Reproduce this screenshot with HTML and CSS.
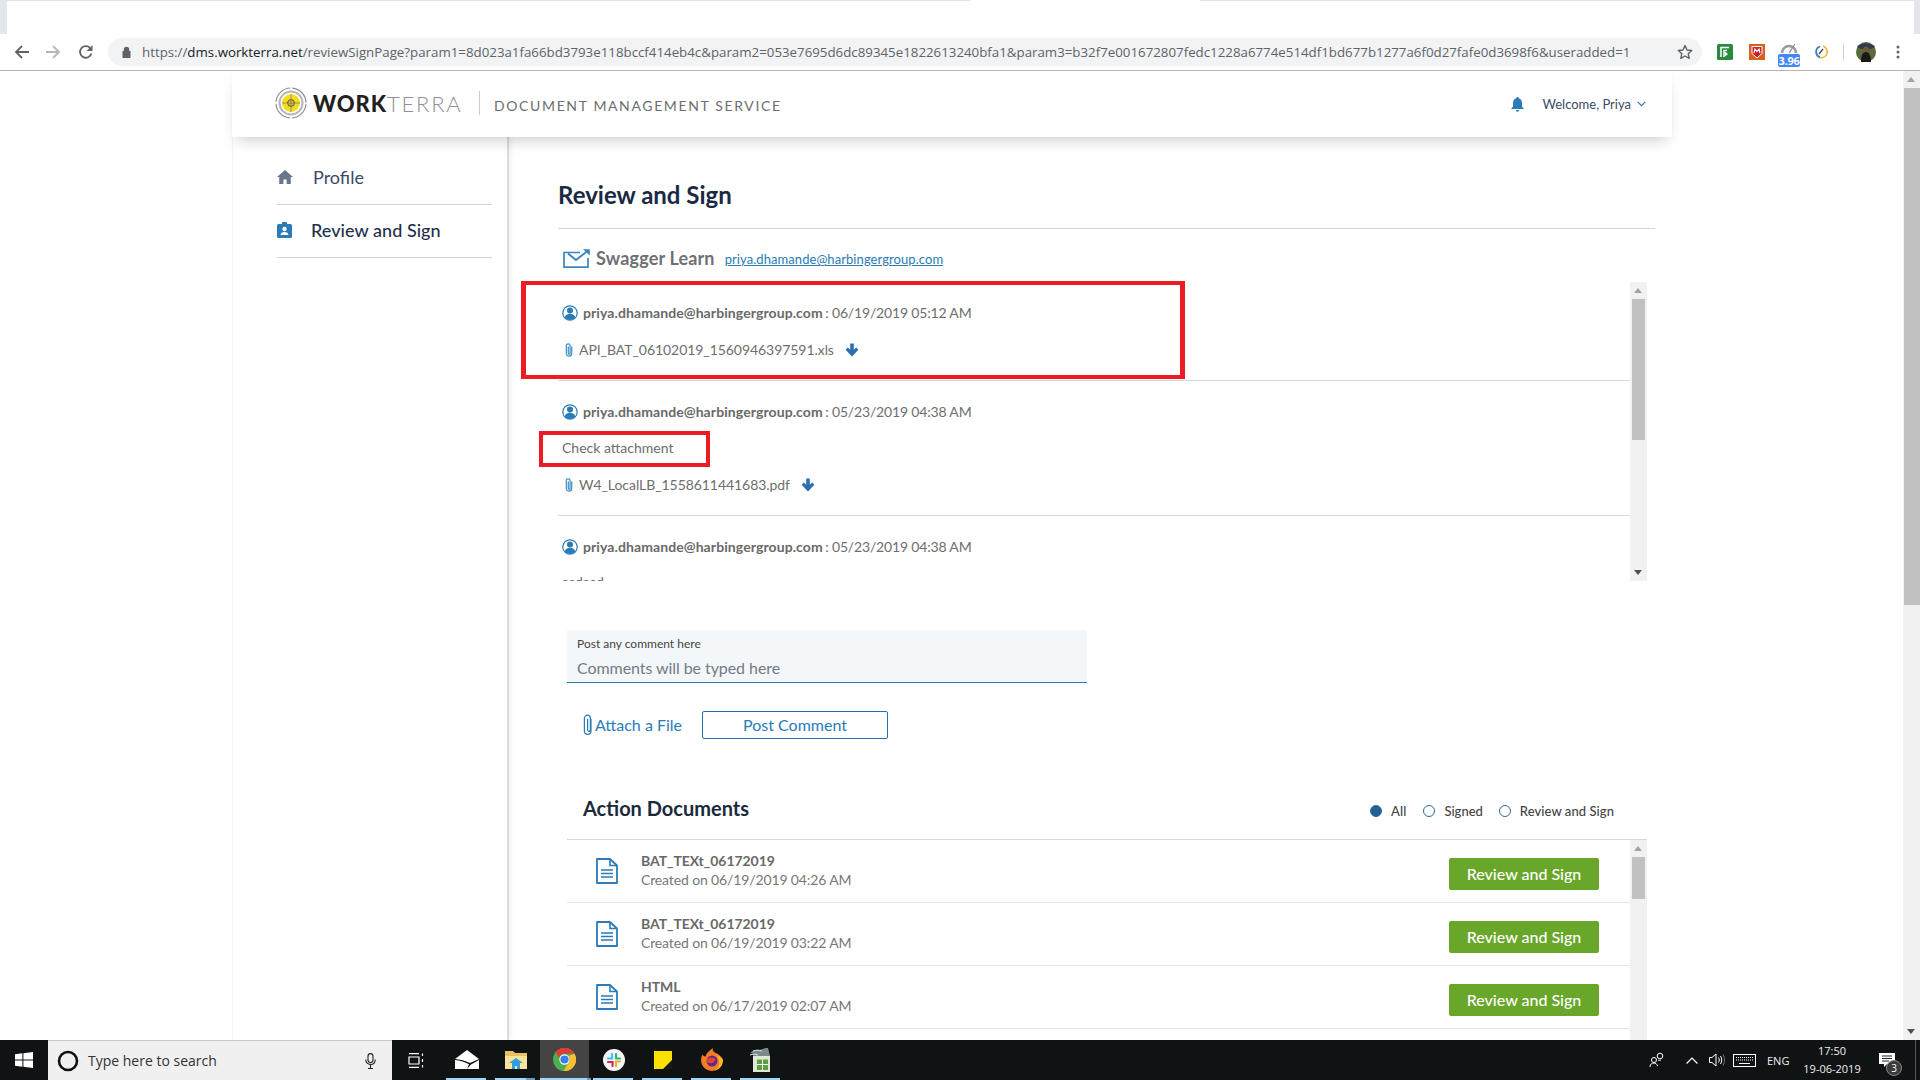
FILE: index.html
```html
<!DOCTYPE html>
<html lang="en">
<head>
<meta charset="utf-8">
<title>Review and Sign</title>
<link rel="stylesheet" href="styles.css">
</head>
<body>
<svg class="defs" width="0" height="0" aria-hidden="true">
  <defs>
    <symbol id="i-user" viewBox="0 0 16 18">
      <circle cx="8" cy="9" r="7.2" fill="#fff" stroke="#2b7bb9" stroke-width="1.2"/>
      <circle cx="8" cy="6.6" r="3" fill="#2b7bb9"/>
      <path d="M2.6 13.6c.7-2.6 2.800-3.800 5.400-3.800s4.700 1.200 5.400 3.800A7 7 0 0 1 8 16a7 7 0 0 1-5.400-2.400z" fill="#2b7bb9"/>
    </symbol>
    <symbol id="i-clip" viewBox="0 0 8 14">
      <path d="M6.700 3.500v7a2.700 2.700 0 0 1-5.400 0V2.800a1.900 1.900 0 0 1 3.800 0v7.400a.9.9 0 0 1-1.800 0V3.500" fill="none" stroke="#3f8bc4" stroke-width="1.200"/>
    </symbol>
    <symbol id="i-down" viewBox="0 0 14 14">
      <path d="M5.200 .5h3.600v6.300l2.300-2.300 2.300 2.300L7 13.500.6 6.800l2.300-2.300 2.300 2.300z" fill="#2b6fb0"/>
    </symbol>
    <symbol id="i-doc" viewBox="0 0 22 26">
      <path d="M1 1h13l7 6.500V25H1z" fill="#fff" stroke="#2b7bb9" stroke-width="1.800" stroke-linejoin="round"/>
      <path d="M14 1v6.500h7M5 12h12M5 15.500h12M5 19h12" fill="none" stroke="#2b7bb9" stroke-width="1.600"/>
    </symbol>
  </defs>
</svg>

<div class="browser">
  <div class="tabstrip">
    <div class="strip-edge"></div>
    <div class="strip-line strip-line-a"></div>
    <div class="strip-tab"></div>
    <div class="strip-line"></div>
    <div class="strip-edge strip-edge-r"></div>
  </div>
  <div class="toolbar">
    <svg class="nav-ico" width="16" height="16" viewBox="0 0 16 16"><path d="M15 8H2M8 2 2 8l6 6" fill="none" stroke="#5f6368" stroke-width="1.800"/></svg>
    <svg class="nav-ico nav-fwd" width="16" height="16" viewBox="0 0 16 16"><path d="M1 8h13M8 2l6 6-6 6" fill="none" stroke="#b4b6b9" stroke-width="1.800"/></svg>
    <svg class="nav-ico nav-rel" width="16" height="16" viewBox="0 0 16 16"><path d="M13.400 9.600A5.800 5.800 0 1 1 12 3.900" fill="none" stroke="#5f6368" stroke-width="1.800"/><path d="M14.500 1v6h-6z" fill="#5f6368"/></svg>
    <div class="omnibox">
      <svg class="lock" width="9" height="12" viewBox="0 0 9 12"><path d="M1.800 5V3.400a2.700 2.700 0 0 1 5.400 0V5H8.500v7H.5V5z" fill="#5f6368"/></svg>
      <span class="url"><span class="url-soft">https://</span>dms.workterra.net<span class="url-soft">/reviewSignPage?param1=8d023a1fa66bd3793e118bccf414eb4c&amp;param2=053e7695d6dc89345e1822613240bfa1&amp;param3=b32f7e001672807fedc1228a6774e514df1bd677b1277a6f0d27fafe0d3698f6&amp;useradded=1</span></span>
      <svg class="star" width="16" height="16" viewBox="0 0 16 16"><path d="m8 1.600 2 4.400 4.700.5-3.500 3.200 1 4.700L8 12l-4.200 2.400 1-4.700-3.500-3.200L6 6z" fill="none" stroke="#5f6368" stroke-width="1.400" stroke-linejoin="round"/></svg>
    </div>
    <div class="exts">
      <svg class="ext ext-a" width="16" height="16" viewBox="0 0 16 16"><rect width="16" height="16" rx="1.500" fill="#2a8a3e"/><path d="M4 13V3.500h8M7 13V6.500h3" fill="none" stroke="#fff" stroke-width="1.500"/><path d="m8 7.500 3 2.500-3 2.500z" fill="#fff"/></svg>
      <svg class="ext ext-b" width="16" height="16" viewBox="0 0 16 16"><rect width="16" height="16" fill="#d9611e"/><path d="M3 2.500h10v7L8 14 3 9.500z" fill="#c8202c" stroke="#fff" stroke-width="1"/><path d="m5 9 1-4 2 2.500L10 5l1 4" fill="none" stroke="#fff" stroke-width="1.200"/></svg>
      <div class="speed">
        <svg width="18" height="13" viewBox="0 0 18 13"><path d="M2 12a7 7 0 0 1 14 0" fill="none" stroke="#9a9a9a" stroke-width="2.500"/><path d="m9 12 6-9" stroke="#8a8a8a" stroke-width="1.200"/></svg>
        <span class="speed-badge">3.96</span>
      </div>
      <svg class="ext ext-d" width="14" height="16" viewBox="0 0 14 16"><path d="M9 2a6 6 0 1 1-6 10" fill="none" stroke="#f2b632" stroke-width="1.600"/><path d="M6 13A5.500 5.500 0 0 1 6 2.500" fill="none" stroke="#2f78d6" stroke-width="1.800"/><path d="m5 10 4-5" stroke="#444" stroke-width="1.300"/></svg>
      <div class="ext-sep"></div>
      <svg class="avatar" width="20" height="20" viewBox="0 0 20 20"><circle cx="10" cy="10" r="10" fill="#5a6a38"/><path d="M1 5C5 0 15 0 19 5l-4 2H5z" fill="#2e3d52"/><circle cx="10" cy="7" r="2.600" fill="#7a5238"/><path d="M5 20c0-7 2-10 5-10s5 3 5 10z" fill="#191919"/></svg>
      <svg class="kebab" width="4" height="14" viewBox="0 0 4 14"><circle cx="2" cy="2" r="1.500" fill="#5f6368"/><circle cx="2" cy="7" r="1.500" fill="#5f6368"/><circle cx="2" cy="12" r="1.500" fill="#5f6368"/></svg>
    </div>
  </div>
</div>

<div class="page">
  <div class="viewport">
    <div class="site">
      <header class="site-header">
        <div class="brand">
          <svg class="logo-mark" width="32" height="34" viewBox="0 0 32 34">
            <circle cx="16" cy="17" r="15" fill="none" stroke="#8f8f8f" stroke-width="1.200" stroke-dasharray="21.560 2" stroke-dashoffset="-1"/>
            <circle cx="16" cy="17" r="11.500" fill="none" stroke="#b5b5b5" stroke-width="2"/>
            <circle cx="16" cy="17" r="9" fill="#f4dd1e"/>
            <circle cx="16" cy="17" r="3.400" fill="#d9c21a" stroke="#555" stroke-width="1"/>
            <path d="M16 8v18M7 17h18" stroke="#777" stroke-width=".7"/>
          </svg>
          <div class="wordmark"><span class="wm-strong">WORK</span><span class="wm-light">TERRA</span></div>
          <div class="brand-sep"></div>
          <div class="brand-sub">DOCUMENT MANAGEMENT SERVICE</div>
        </div>
        <div class="user-menu">
          <svg width="13" height="15" viewBox="0 0 13 15"><path d="M6.500 0c.8 0 1.200.5 1.200 1.200C10 1.800 11 3.800 11 6v3.500l2 2.500H0l2-2.500V6c0-2.200 1-4.200 3.300-4.800C5.300.5 5.700 0 6.500 0zM4.800 13h3.400a1.700 1.700 0 0 1-3.400 0z" fill="#2b7bb9"/></svg>
          <span class="welcome">Welcome, Priya</span>
          <svg width="9" height="6" viewBox="0 0 9 6"><path d="m.7.8 3.800 3.800L8.300.8" fill="none" stroke="#2b7bb9" stroke-width="1.200"/></svg>
        </div>
      </header>

      <div class="site-body">
        <nav class="sidebar">
          <a class="nav-item nav-item-first">
            <svg width="16" height="14" viewBox="0 0 16 14"><path d="M8 0l8 7h-2.200v7H9.600V9.500H6.400V14H2.200V7H0z" fill="#68778f"/></svg>
            <span class="nav-label">Profile</span>
          </a>
          <a class="nav-item nav-item-active">
            <svg width="15" height="16" viewBox="0 0 15 16"><path d="M1.500 2H5V.8A.8.8 0 0 1 5.800 0h3.400a.8.8 0 0 1 .8.800V2h3.500A1.500 1.500 0 0 1 15 3.500v11a1.500 1.500 0 0 1-1.500 1.500h-12A1.500 1.500 0 0 1 0 14.500v-11A1.500 1.500 0 0 1 1.500 2z" fill="#2b7bb9"/><circle cx="7.500" cy="7" r="2.200" fill="#fff"/><path d="M3.500 13c0-2 1.700-3 4-3s4 1 4 3z" fill="#fff"/></svg>
            <span class="nav-label">Review and Sign</span>
          </a>
        </nav>

        <main class="content">
          <h1 class="page-title">Review and Sign</h1>
          <div class="thread-head">
            <svg width="27" height="19" viewBox="0 0 27 19"><path d="M17 3.500H1V18.200H25V9" fill="none" stroke="#3a86c0" stroke-width="1.700"/><path d="m5 4.500 8 6.500L24.500 2" fill="none" stroke="#3a86c0" stroke-width="1.900"/><path d="M20 .3H26.800V6.500z" fill="#3a86c0"/></svg>
            <span class="thread-title">Swagger Learn</span>
            <a class="thread-mail">priya.dhamande@harbingergroup.com</a>
          </div>

          <div class="feed">
            <div class="feed-list">
              <div class="post">
                <div class="post-meta"><svg class="ico-user" width="16" height="18"><use href="#i-user"/></svg><b>priya.dhamande@harbingergroup.com</b><span class="post-date"> : 06/19/2019 05:12 AM</span></div>
                <div class="post-file"><svg class="ico-clip" width="8" height="14"><use href="#i-clip"/></svg><span>API_BAT_06102019_1560946397591.xls</span><svg class="ico-down" width="14" height="14"><use href="#i-down"/></svg></div>
              </div>
              <div class="post">
                <div class="post-meta"><svg class="ico-user" width="16" height="18"><use href="#i-user"/></svg><b>priya.dhamande@harbingergroup.com</b><span class="post-date"> : 05/23/2019 04:38 AM</span></div>
                <div class="post-msg">Check attachment</div>
                <div class="post-file"><svg class="ico-clip" width="8" height="14"><use href="#i-clip"/></svg><span>W4_LocalLB_1558611441683.pdf</span><svg class="ico-down" width="14" height="14"><use href="#i-down"/></svg></div>
              </div>
              <div class="post post-cut">
                <div class="post-meta"><svg class="ico-user" width="16" height="18"><use href="#i-user"/></svg><b>priya.dhamande@harbingergroup.com</b><span class="post-date"> : 05/23/2019 04:38 AM</span></div>
                <div class="post-msg">asdasd</div>
              </div>
            </div>
            <div class="sbar">
              <span class="sbar-up"></span>
              <span class="sbar-thumb thumb-feed"></span>
              <span class="sbar-fill"></span>
              <span class="sbar-down"></span>
            </div>
          </div>

          <div class="comment-box">
            <div class="comment-label">Post any comment here</div>
            <div class="comment-input">Comments will be typed here</div>
          </div>
          <div class="comment-actions">
            <a class="attach"><svg width="10" height="22" viewBox="0 0 10 22"><path d="M8 5v12a3.300 3.300 0 0 1-6.600 0V4.200a3 3 0 0 1 6 0V16a1.400 1.400 0 0 1-2.800 0V5" fill="none" stroke="#2b7bb9" stroke-width="1.200"/></svg><span>Attach a File</span></a>
            <button class="btn-outline">Post Comment</button>
          </div>

          <section class="docs">
            <div class="docs-head">
              <h2 class="docs-title">Action Documents</h2>
              <div class="filters">
                <span class="radio radio-on"></span><span class="radio-label radio-label-a">All</span>
                <span class="radio"></span><span class="radio-label radio-label-b">Signed</span>
                <span class="radio"></span><span class="radio-label radio-label-c">Review and Sign</span>
              </div>
            </div>
            <div class="docs-body">
              <div class="docs-list">
                <div class="doc">
                  <svg class="ico-doc" width="22" height="26"><use href="#i-doc"/></svg>
                  <div class="doc-text"><div class="doc-name">BAT_TEXt_06172019</div><div class="doc-date">Created on 06/19/2019 04:26 AM</div></div>
                  <button class="btn-green">Review and Sign</button>
                </div>
                <div class="doc">
                  <svg class="ico-doc" width="22" height="26"><use href="#i-doc"/></svg>
                  <div class="doc-text"><div class="doc-name">BAT_TEXt_06172019</div><div class="doc-date">Created on 06/19/2019 03:22 AM</div></div>
                  <button class="btn-green">Review and Sign</button>
                </div>
                <div class="doc">
                  <svg class="ico-doc" width="22" height="26"><use href="#i-doc"/></svg>
                  <div class="doc-text"><div class="doc-name">HTML</div><div class="doc-date">Created on 06/17/2019 02:07 AM</div></div>
                  <button class="btn-green">Review and Sign</button>
                </div>
              </div>
              <div class="sbar sbar-docs">
                <span class="sbar-up"></span>
                <span class="sbar-thumb thumb-docs"></span>
                <span class="sbar-fill"></span>
              </div>
            </div>
          </section>

          <div class="mark mark-a"></div>
          <div class="mark mark-b"></div>
        </main>
      </div>
    </div>
  </div>
  <div class="sbar sbar-page">
    <span class="sbar-up"></span>
    <span class="sbar-thumb thumb-page"></span>
    <span class="sbar-fill"></span>
    <span class="sbar-down"></span>
  </div>
</div>

<footer class="taskbar">
  <div class="tb-start">
    <svg width="18" height="16" viewBox="0 0 18 16"><path d="M0 2.300 7.400 1.300v6.200H0zM8.400 1.200 18 0v7.500H8.400zM0 8.500h7.400v6.200L0 13.700zM8.400 8.500H18V16l-9.600-1.200z" fill="#fff"/></svg>
  </div>
  <div class="tb-search">
    <svg width="22" height="22" viewBox="0 0 22 22"><circle cx="11" cy="11" r="9" fill="none" stroke="#111" stroke-width="2.600"/></svg>
    <span class="tb-search-text">Type here to search</span>
    <svg class="tb-mic" width="11" height="16" viewBox="0 0 11 16"><rect x="3" y=".6" width="5" height="9" rx="2.500" fill="none" stroke="#222" stroke-width="1.100"/><path d="M.8 6.500c0 3.200 2 5 4.700 5s4.700-1.800 4.700-5M5.500 11.500v4M3 15.500h5" fill="none" stroke="#222" stroke-width="1.100"/></svg>
  </div>
  <div class="tb-view">
    <svg width="16" height="15" viewBox="0 0 16 15"><path d="M1 .6h10M1 14.400h10M1 4h10v7H1zM14.500 .6v2.500M14.500 6v3M14.500 12v2.500" fill="none" stroke="#fff" stroke-width="1.200"/></svg>
  </div>
  <div class="tb-app">
    <svg width="24" height="19" viewBox="0 0 24 19"><path d="M12 0 24 9v10H0V9z" fill="#fff"/><path d="M0 9c5 .5 10 1.500 15 4l9-4v1l-8 4.500L12 19l2-4.800C10 12 5 10.500 0 10z" fill="#111"/></svg>
  </div>
  <div class="tb-app tb-stack">
    <svg width="22" height="18" viewBox="0 0 22 18"><path d="M0 0h8l2 2h12v16H0z" fill="#e8c260"/><path d="M0 5h22v13H0z" fill="#fbe49a"/><path d="M11 7l7 5h-3v6h-3v-3h-2v3H7v-6H4z" fill="#2f9fe0"/></svg>
  </div>
  <div class="tb-app tb-app-on tb-stack">
    <svg width="23" height="23" viewBox="0 0 24 24"><circle cx="12" cy="12" r="12" fill="#4caf50"/><path d="M12 0a12 12 0 0 1 10.400 6H12a6 6 0 0 0-5.800 4.500L2.800 4.300A12 12 0 0 1 12 0z" fill="#e53935"/><path d="M22.400 6A12 12 0 0 1 11 24l5.200-8.500A6 6 0 0 0 16.500 8z" fill="#fbc02d"/><circle cx="12" cy="12" r="5.400" fill="#fff"/><circle cx="12" cy="12" r="4.300" fill="#3f7ee8"/></svg>
  </div>
  <div class="tb-app">
    <svg width="22" height="22" viewBox="0 0 22 22"><circle cx="11" cy="11" r="11" fill="#f4f4f4"/><g fill="none" stroke-width="2.200" stroke-linecap="round"><path d="M9 5v4.500H5" stroke="#36c5f0"/><path d="M5 13h4.500v4" stroke="#e01e5a"/><path d="M13 17v-4.500h4" stroke="#ecb22e"/><path d="M13 9.500V5M13 9.500h4" stroke="#2eb67d"/></g></svg>
  </div>
  <div class="tb-app">
    <svg width="18" height="18" viewBox="0 0 18 18"><path d="M0 0h18v18H0z" fill="#ffe100"/><path d="M9 18l9-9v9z" fill="#1a1a1a"/></svg>
  </div>
  <div class="tb-app">
    <svg width="22" height="23" viewBox="0 0 22 23"><path d="M11 23A11 11 0 0 1 1.500 6.500C2.500 8 3.500 8.500 4.500 8.500 5.500 5 8 3 12 0c-1 3 1 4 4 5.500 3.500 2 6 5 6 7A11 11 0 0 1 11 23z" fill="#f57c22"/><path d="M22 12.500A11 11 0 0 1 11 23c6-1 8-6 7-11-.5-2.500-2-4-3-5 3 1 6.500 3 7 5.500z" fill="#fbb92a"/><circle cx="11" cy="13" r="5.500" fill="#5c2a8f"/><path d="M6 11c2-2 6-2 8.500 0-1 4.500-5.500 5.500-8.500 3z" fill="#e8402d"/></svg>
  </div>
  <div class="tb-app">
    <svg width="23" height="24" viewBox="0 0 23 24"><path d="M4 8h17v16H4z" fill="#dfe8d5"/><path d="M8 11.500h11V22H8z" fill="#5f9e45"/><path d="M13.500 11.500V22M8 16.500h11" stroke="#fff"/><path d="M1 5c3-3 6-4 10-3 2-1 5-2 8-2l2 8H4C5 6 3 5 1 5z" fill="#7b8a8c"/><path d="M1 7c3-1 5-1 8 0M4 3c3-1 6-1 9 0" fill="none" stroke="#dfe3e3"/></svg>
  </div>

  <div class="tray">
    <div class="tray-people"><svg width="16" height="16" viewBox="0 0 16 16"><circle cx="11" cy="4" r="2.800" fill="none" stroke="#fff"/><circle cx="5" cy="8" r="2.500" fill="none" stroke="#fff"/><path d="M1 15c0-3 2-4 4-4 1.500 0 3 1 3.500 3M9 8c1 .5 2 .5 3 0" fill="none" stroke="#fff"/></svg></div>
    <div class="tray-chev"><svg width="12" height="7" viewBox="0 0 12 7"><path d="m.6 6.500 5.400-5.500 5.400 5.500" fill="none" stroke="#fff" stroke-width="1.200"/></svg></div>
    <div class="tray-vol"><svg width="16" height="14" viewBox="0 0 16 14"><path d="M.5 4.500h2.500L7 1v12L3 9.500H.5zM9.500 4.500c1 1.500 1 3.500 0 5M11.500 3c1.600 2.500 1.600 5.500 0 8" fill="none" stroke="#fff"/><path d="M14 1.500c2 3.500 2 7.500 0 11" fill="none" stroke="#777"/></svg></div>
    <div class="tray-keys"><svg width="23" height="13" viewBox="0 0 23 13"><rect x=".5" y=".5" width="22" height="12" fill="none" stroke="#fff"/><path d="M3 3.500h17M3 6h17" stroke="#fff" stroke-dasharray="1 1"/><path d="M6 9.500h11" stroke="#fff"/></svg></div>
    <div class="tray-lang">ENG</div>
    <div class="tray-clock"><div>17:50</div><div>19-06-2019</div></div>
    <div class="tray-notif">
      <svg width="16" height="15" viewBox="0 0 16 15"><path d="M0 0h16v11H8l-3 3v-3H0z" fill="#fff"/><path d="M3 3h10M3 5.500h10M3 8h7" stroke="#222"/></svg>
      <span class="notif-badge">3</span>
    </div>
    <div class="tray-sep"></div>
  </div>
</footer>
</body>
</html>
```
FILE: styles.css
```css
* { box-sizing: border-box; }
html, body { margin: 0; padding: 0; height: 100%; }
body {
  width: 1920px; height: 1080px; overflow: hidden;
  display: flex; flex-direction: column;
  background: #fff; color: #666;
  font-family: Lato, "Open Sans", sans-serif;
}
.defs { position: absolute; }
svg { display: block; flex: none; }

/* Browser chrome */
.browser { height: 71px; flex: none; border-bottom: 1px solid #b5b5b5; }
.tabstrip { height: 34px; display: flex; background: #fff; }
.strip-edge { width: 7px; background: #e3e6ea; }
.strip-edge-r { width: 6px; }
.strip-line { flex: 1; border-top: 1px solid #dee1e6; }
.strip-line-a { flex: none; width: 963px; }
.strip-tab { width: 230px; }
.toolbar { height: 36px; display: flex; align-items: center; padding-left: 14px; }
.nav-fwd { margin-left: 15px; }
.nav-rel { margin-left: 17px; }
.omnibox {
  margin-left: 14px; width: 1594px; height: 28px; border-radius: 14px;
  background: #f1f3f4; display: flex; align-items: center; padding-left: 14px;
}
.lock { margin-right: 11px; }
.url { font-family: "Open Sans", sans-serif; font-size: 13.3px; color: #202124; white-space: nowrap; width: 1486px; }
.url-soft { color: #5f6368; }
.star { margin-left: 49px; }
.exts { display: flex; align-items: center; margin-left: 15px; }
.ext-b { margin-left: 16px; }
.speed { margin-left: 13px; width: 22px; height: 26px; display: flex; flex-direction: column; align-items: center; margin-top: 4px; }
.speed-badge { background: #4285f4; color: #fff; font: 700 11px/13px "Open Sans", sans-serif; width: 22px; text-align: center; border-radius: 2px; letter-spacing: -.3px; }
.ext-d { margin-left: 14px; }
.ext-sep { width: 1px; height: 16px; background: #ccc; margin-left: 15px; }
.avatar { margin-left: 12px; }
.kebab { margin-left: 20px; }

/* Page */
.page { height: 969px; flex: none; display: flex; overflow: hidden; }
.viewport { flex: 1; overflow: hidden; }
.site { margin-left: 232px; width: 1440px; }
.site-header {
  height: 66px; display: flex; align-items: center; justify-content: space-between;
  background: #fff; box-shadow: 0 8px 14px -5px rgba(0,0,0,.2), 0 0 1px rgba(0,0,0,.06); position: relative; z-index: 2;
  padding: 0 26px 0 43px;
}
.brand { display: flex; align-items: center; margin-top: -3px; }
.wordmark { margin-left: 6px; width: 145px; font-size: 22px; line-height: 30px; white-space: nowrap; margin-top: 2px; }
.wm-strong { font-weight: 900; color: #231f20; letter-spacing: .9px; }
.wm-light { font-weight: 300; color: #8f9193; letter-spacing: 1.8px; }
.brand-sep { width: 1px; height: 24px; background: #ccc; margin-left: 21px; }
.brand-sub { margin-left: 14px; font-size: 14px; letter-spacing: 1.63px; color: #6d6e70; margin-top: 6px; }
.user-menu { display: flex; align-items: center; }
.welcome { font-size: 13px; color: #3b4a66; margin: 0 6px 0 18px; }

.site-body { display: flex; height: 903px; }
.sidebar {
  width: 277px; flex: none; padding: 0 15px 0 44px;
  border-left: 1px solid #f3f3f3; border-right: 2px solid #dcdcdc;
  box-shadow: 2px 0 4px rgba(0,0,0,.06);
}
.nav-item { display: flex; align-items: center; border-bottom: 1px solid #d5d5d5; }
.nav-item-first { height: 68px; padding-top: 13px; }
.nav-item-active { height: 53px; padding-bottom: 3px; }
.nav-label { font-size: 18px; color: #3a4a68; margin-left: 20px; }
.nav-item-active .nav-label { color: #1f2f4d; font-weight: 500; margin-left: 19px; letter-spacing: .05px; }
.nav-item-active svg { margin-top: 1px; }

.content { flex: 1; padding: 38px 17px 0 49px; position: relative; }
.page-title {
  margin: 0; height: 54px; padding-bottom: 13px; border-bottom: 1px solid #d5d5d5;
  font-size: 24px; line-height: 40px; font-weight: 700; color: #1a2a44;
}
.thread-head { height: 48px; margin-top: 5px; display: flex; align-items: center; padding-left: 5px; }
.thread-title { margin-left: 6px; font-size: 18px; font-weight: 700; color: #707074; letter-spacing: .15px; }
.thread-mail { margin: 2px 0 0 10px; font-size: 13px; color: #2a7cb3; text-decoration: underline; letter-spacing: .07px; }

.feed { height: 299px; display: flex; overflow: hidden; margin-right: 8px; }
.feed-list { flex: 1; }
.post { padding: 21px 0 20px 4px; border-bottom: 1px solid #d8d8d8; }
.post-meta, .post-file, .post-msg { height: 20px; display: flex; align-items: center; font-size: 14px; line-height: 20px; color: #6e6e6e; }
.post-meta b { font-weight: 700; margin-left: 5px; color: #696969; letter-spacing: .09px; }
.post-date { white-space: pre; letter-spacing: -.17px; margin-left: -1px; }
.post-file { margin-top: 17px; padding-left: 3px; }
.post-file span { margin-left: 6px; letter-spacing: -.06px; }
.post-msg { margin-top: 16px; }
.post-cut .post-msg { margin-top: 15px; }
.ico-down { margin-left: 11px; }

.sbar { width: 17px; flex: none; background: #f1f1f1; display: flex; flex-direction: column; align-items: center; }
.sbar-up, .sbar-down { height: 17px; width: 100%; flex: none; position: relative; }
.sbar-up::after, .sbar-down::after {
  content: ""; position: absolute; left: 4px; top: 6px;
  border-left: 4px solid transparent; border-right: 4px solid transparent;
}
.sbar-up::after { border-bottom: 5px solid #a3a3a3; }
.sbar-down::after { border-top: 5px solid #505050; }
.sbar-thumb { width: 13px; background: #c1c1c1; flex: none; }
.sbar-fill { flex: 1; }
.thumb-feed { height: 141px; }
.thumb-docs { height: 42px; }
.thumb-page { width: 16px; height: 517px; margin-left: 1px; }
.sbar-docs { height: 200px; }

.comment-box { width: 520px; height: 53px; margin: 49px 0 0 9px; padding: 7px 10px 0; background: #f4f7fa; border-bottom: 1px solid #2b7bb9; }
.comment-label { font-size: 12px; line-height: 14px; color: #444; }
.comment-input { font-size: 16px; line-height: 18px; margin-top: 8px; color: #737b85; letter-spacing: -.07px; }
.comment-actions { display: flex; align-items: center; height: 28px; margin: 28px 0 0 25px; }
.attach { display: flex; align-items: center; font-size: 16px; color: #2b7bb9; gap: 2px; width: 119px; line-height: 26px; }
.attach span { margin-top: -1px; }
.btn-outline {
  width: 186px; height: 28px; padding: 0 0 2px; background: #fff; border: 1px solid #1f72b2; border-radius: 2px;
  font: 400 16px Lato, sans-serif; color: #2b7bb9;
}

.docs { margin: 50px 0 0 9px; width: 1080px; }
.docs-head { height: 50px; padding: 0 33px 12px 16px; display: flex; align-items: center; justify-content: space-between; }
.docs-title { margin: 0; font-size: 20px; font-weight: 700; color: #1a2a3a; }
.filters { display: flex; align-items: center; margin-top: 6px; }
.radio { width: 12px; height: 12px; border-radius: 50%; border: 1px solid #2a6a9c; }
.radio-on { background: #1f5f92; }
.radio-label { font-size: 13px; font-weight: 500; color: #444; margin-left: 9px; }
.radio-label-a { margin-right: 17px; letter-spacing: .1px; }
.radio-label-b { margin-right: 16px; }
.radio-label-c { letter-spacing: .07px; }
.docs-body { display: flex; border-top: 1px solid #d8d8d8; height: 200px; }
.docs-list { flex: 1; }
.doc { height: 63px; display: flex; align-items: center; padding: 0 31px 0 29px; border-bottom: 1px solid #e4e4e4; }
.doc-text { flex: 1; margin-left: 23px; margin-top: -3px; }
.doc-name { font-size: 14px; line-height: 19px; font-weight: 700; color: #696969; letter-spacing: -.05px; }
.doc-date { font-size: 14px; line-height: 19px; color: #777; letter-spacing: -.13px; }
.btn-green {
  width: 150px; height: 32px; padding: 0; margin-top: 5px; border: 0; border-radius: 2px;
  background: #69a72b; color: #fff; font: 500 16px Lato, sans-serif;
}

.mark { position: absolute; border-style: solid; border-color: #ed1c24; }
.mark-a { left: 12px; top: 144px; width: 664px; height: 98px; border-width: 4px 5px; }
.mark-b { left: 30px; top: 294px; width: 171px; height: 36px; border-width: 4px; }

/* Taskbar */
.taskbar { height: 40px; flex: none; display: flex; align-items: center; background: #101314; color: #fff; font-family: "Open Sans", sans-serif; }
.tb-start { width: 48px; height: 40px; display: flex; align-items: center; justify-content: center; }
.tb-search { width: 344px; height: 40px; display: flex; align-items: center; background: #f0f0f0; padding: 0 16px 0 9px; border-top: 1px solid #c8c8c8; }
.tb-search-text { flex: 1; margin-left: 9px; font-size: 14px; color: #333; }
.tb-view { width: 47px; display: flex; justify-content: center; margin-right: 3px; }
.tb-app { width: 49px; height: 40px; display: flex; align-items: center; justify-content: center; position: relative; flex: none; }
.tb-app svg { margin-top: -1px; }
.tb-app::after { content: ""; position: absolute; left: 4px; right: 5px; bottom: 0; height: 2px; background: #9fd8f6; }
.tb-stack::before { content: ""; position: absolute; right: 5px; bottom: 0; width: 9px; height: 2px; background: #6e9cb5; z-index: 1; }
.tb-app-on { background: #444; }
.tb-app-on::after { left: 0; right: -2px; }
.tb-app-on.tb-stack::before { right: -2px; width: 4px; }
.tray { margin-left: auto; width: 280px; flex: none; display: flex; align-items: center; height: 40px; }
.tray-people { width: 34px; display: flex; justify-content: center; }
.tray-chev { width: 35px; display: flex; justify-content: center; }
.tray-vol { width: 16px; }
.tray-keys { margin-left: 8px; }
.tray-lang { margin-left: 11px; width: 23px; font-size: 11px; white-space: nowrap; color: #eee; }
.tray-clock { width: 84px; text-align: center; font-size: 11px; line-height: 18px; color: #eee; }
.tray-notif { margin-left: 5px; width: 16px; position: relative; }
.notif-badge {
  position: absolute; left: 7px; top: 7px; width: 16px; height: 16px; border-radius: 50%;
  background: #3a3a3a; border: 1px solid #888; color: #fff; font-size: 10px; line-height: 14px; text-align: center;
}
.tray-sep { width: 1px; height: 40px; background: #555; margin-left: 20px; }
```
